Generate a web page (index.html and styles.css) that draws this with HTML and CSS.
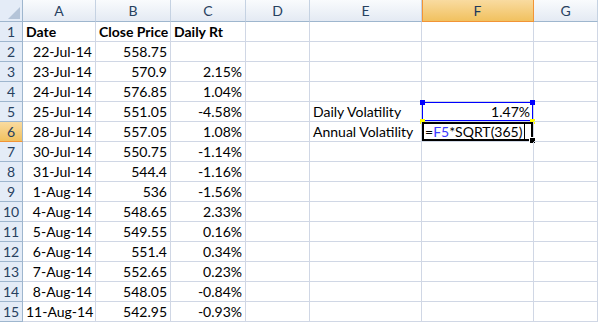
FILE: index.html
```html
<!DOCTYPE html>
<html lang="en">
<head>
    <meta charset="UTF-8">
    <title>Volatility Sheet</title>
    <link rel="stylesheet" href="styles.css">
</head>
<body>
    <table class="sheet">
        <colgroup>
            <col class="w-row">
            <col class="w-a">
            <col class="w-b">
            <col class="w-c">
            <col class="w-d">
            <col class="w-e">
            <col class="w-f">
            <col class="w-g">
        </colgroup>
        <thead>
            <tr>
                <th class="corner"><span class="tri"></span></th>
                <th>A</th>
                <th>B</th>
                <th>C</th>
                <th>D</th>
                <th>E</th>
                <th class="active">F</th>
                <th>G</th>
            </tr>
        </thead>
        <tbody>
            <tr><th>1</th><td class="bold">Date</td><td class="bold">Close Price</td><td class="bold">Daily Rt</td><td></td><td></td><td></td><td></td></tr>
            <tr><th>2</th><td class="num">22-Jul-14</td><td class="num">558.75</td><td></td><td></td><td></td><td></td><td></td></tr>
            <tr><th>3</th><td class="num">23-Jul-14</td><td class="num">570.9</td><td class="num">2.15%</td><td></td><td></td><td></td><td></td></tr>
            <tr><th>4</th><td class="num">24-Jul-14</td><td class="num">576.85</td><td class="num">1.04%</td><td></td><td></td><td></td><td></td></tr>
            <tr><th>5</th><td class="num">25-Jul-14</td><td class="num">551.05</td><td class="num">-4.58%</td><td></td><td>Daily Volatility</td>
                <td class="num ref">1.47%<span class="h tl"></span><span class="h tr"></span><span class="h bl"></span><span class="h br"></span></td><td></td></tr>
            <tr><th class="active">6</th><td class="num">28-Jul-14</td><td class="num">557.05</td><td class="num">1.08%</td><td></td><td>Annual Volatility</td>
                <td class="editing"><span class="fx-ref">=</span><span class="fx-ref">F5</span>*SQRT(365)<span class="caret"></span><span class="fill"></span></td><td></td></tr>
            <tr><th>7</th><td class="num">30-Jul-14</td><td class="num">550.75</td><td class="num">-1.14%</td><td></td><td></td><td></td><td></td></tr>
            <tr><th>8</th><td class="num">31-Jul-14</td><td class="num">544.4</td><td class="num">-1.16%</td><td></td><td></td><td></td><td></td></tr>
            <tr><th>9</th><td class="num">1-Aug-14</td><td class="num">536</td><td class="num">-1.56%</td><td></td><td></td><td></td><td></td></tr>
            <tr><th>10</th><td class="num">4-Aug-14</td><td class="num">548.65</td><td class="num">2.33%</td><td></td><td></td><td></td><td></td></tr>
            <tr><th>11</th><td class="num">5-Aug-14</td><td class="num">549.55</td><td class="num">0.16%</td><td></td><td></td><td></td><td></td></tr>
            <tr><th>12</th><td class="num">6-Aug-14</td><td class="num">551.4</td><td class="num">0.34%</td><td></td><td></td><td></td><td></td></tr>
            <tr><th>13</th><td class="num">7-Aug-14</td><td class="num">552.65</td><td class="num">0.23%</td><td></td><td></td><td></td><td></td></tr>
            <tr><th>14</th><td class="num">8-Aug-14</td><td class="num">548.05</td><td class="num">-0.84%</td><td></td><td></td><td></td><td></td></tr>
            <tr><th>15</th><td class="num">11-Aug-14</td><td class="num">542.95</td><td class="num">-0.93%</td><td></td><td></td><td></td><td></td></tr>
        </tbody>
    </table>
</body>
</html>
```
FILE: styles.css
```css
body {
    margin: 0;
    background: #ffffff;
    font-family: Lato, "Open Sans", sans-serif;
    font-size: 14px;
    color: #000;
    overflow: hidden;
}
.sheet {
    border-collapse: separate;
    border-spacing: 0;
    table-layout: fixed;
    width: 598px;
}
.w-row { width: 23px; }
.w-a { width: 73px; }
.w-b { width: 75px; }
.w-c { width: 75px; }
.w-d { width: 64px; }
.w-e { width: 112px; }
.w-f { width: 112px; }
.w-g { width: 64px; }

.sheet th,
.sheet td {
    padding: 0 3px;
    height: 19px;
    line-height: 19px;
    border-right: 1px solid #d0d7e5;
    border-bottom: 1px solid #d0d7e5;
    white-space: nowrap;
    overflow: visible;
    position: relative;
}
.sheet thead th {
    height: 21px;
    line-height: 21px;
    font-weight: normal;
    text-align: center;
    color: #27415f;
    background: linear-gradient(#f9fbfd, #e4eaf3);
    border-right: 1px solid #c5d2e2;
    border-bottom: 1px solid #9eb6ce;
}
.sheet thead th.active {
    background: linear-gradient(#f9dba0, #f1c15f);
    border-right: 1px solid #f29436;
    border-bottom: 1px solid #f29436;
    box-shadow: inset 1px 0 0 #f29436;
    color: #1e395b;
}
.sheet tbody th {
    padding: 0;
    font-weight: normal;
    text-align: center;
    color: #27415f;
    background: #e4ecf7;
    border-right: 1px solid #9eb6ce;
    border-bottom: 1px solid #9eb6ce;
}
.sheet tbody th.active {
    background: linear-gradient(#f9dba0, #f1c15f);
    border-bottom: 1px solid #f29436;
}
.sheet thead th.corner {
    border-right: 1px solid #9eb6ce;
    background: #e4ecf7;
    padding: 0;
}
.tri {
    position: absolute;
    right: 2px;
    bottom: 2px;
    width: 0;
    height: 0;
    border-left: 12px solid transparent;
    border-bottom: 12px solid #b4c4d8;
}
.bold { font-weight: bold; }
.num { text-align: right; }

.ref {
    box-shadow: inset 0 0 0 1px #0000ff;
}
.h {
    position: absolute;
    width: 5px;
    height: 5px;
    background: #0000ff;
}
.tl { left: -2px; top: -2px; }
.tr { right: -2px; top: -2px; }
.bl { left: -2px; bottom: -3px; background: #ffff00; }
.br { right: -2px; bottom: -3px; background: #ffff00; }

.editing {
    box-shadow: inset 0 0 0 2px #000;
    padding-left: 3px;
}
.fx-ref { color: #3c3cff; }
.fx-ref:first-child { color: #000; }
.caret {
    display: inline-block;
    width: 1px;
    height: 16px;
    background: #000;
    vertical-align: -3px;
    margin-left: 2px;
}
.fill {
    position: absolute;
    right: -3px;
    bottom: -3px;
    width: 5px;
    height: 5px;
    background: #000;
    border: 1px solid #fff;
}
```
